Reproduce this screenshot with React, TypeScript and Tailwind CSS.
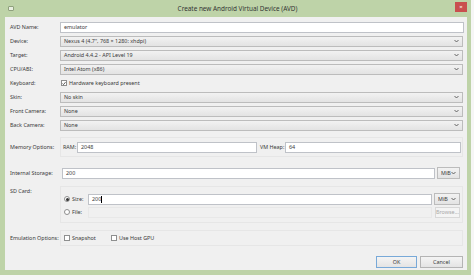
import React from 'react';

const Chevron: React.FC = () => (
  <svg width="5" height="4" viewBox="0 0 5 4" className="shrink-0">
    <path d="M0.5 1 L2.5 3 L4.5 1" fill="none" stroke="#555" strokeWidth="0.9" />
  </svg>
);

const Select: React.FC<{ value: string; className?: string }> = ({ value, className = '' }) => (
  <div
    className={`h-[11px] flex items-center justify-between pl-[3px] pr-[3px] border border-[#bcbcbc] bg-gradient-to-b from-[#f2f2f2] to-[#e3e3e3] ${className}`}
  >
    <span className="leading-[8px] whitespace-nowrap">{value}</span>
    <Chevron />
  </div>
);

const Input: React.FC<{ value?: string; className?: string; caret?: boolean }> = ({ value = '', className = '', caret }) => (
  <div className={`h-[11px] flex items-center pl-[3px] border border-[#bfc2c8] bg-white ${className}`}>
    <span className="leading-[8px]">{value}</span>
    {caret && <span className="w-[0.5px] h-[7px] bg-black" />}
  </div>
);

const Check: React.FC<{ checked?: boolean }> = ({ checked }) => (
  <div className="w-[6px] h-[6px] border border-[#8e8f8f] bg-white flex items-center justify-center shrink-0">
    {checked && (
      <svg width="5" height="5" viewBox="0 0 5 5">
        <path d="M0.6 2.6 L1.9 3.9 L4.4 0.8" fill="none" stroke="#222" strokeWidth="0.9" />
      </svg>
    )}
  </div>
);

const Radio: React.FC<{ checked?: boolean }> = ({ checked }) => (
  <div className="w-[6px] h-[6px] rounded-full border border-[#8e8f8f] bg-white flex items-center justify-center shrink-0">
    {checked && <div className="w-[3px] h-[3px] rounded-full bg-[#333]" />}
  </div>
);

const Row: React.FC<{ label: string; children: React.ReactNode }> = ({ label, children }) => (
  <div className="h-[14px] flex items-center">
    <div className="w-[50px] shrink-0">{label}</div>
    <div className="flex-1">{children}</div>
  </div>
);

const App: React.FC = () => {
  return (
    <div className="w-[474px] h-[280px] bg-[#f6f6f6] overflow-hidden font-['Noto_Sans',sans-serif]">
      <div className="w-[471px] h-[275px] bg-[#bed3a8] flex flex-col pl-[5px] pr-[4px] pb-[5px]">
        {/* Title bar */}
        <div className="h-[17px] flex items-center shrink-0">
          <div className="w-[6px] h-[5px] ml-[3px] bg-[#e8eee0] border border-[#8fa07d] rounded-[1px]" />
          <div className="flex-1 text-center text-[6.4px] text-[#333] pl-[6px]">Create new Android Virtual Device (AVD)</div>
          <div className="w-[12px] h-[10px] mb-[3px] bg-[#c94f4f] flex items-center justify-center text-white text-[6px] leading-none">
            ×
          </div>
        </div>

        {/* Client area */}
        <div className="flex-1 bg-[#f0f0f0] flex flex-col pl-[5px] pr-[4px] pt-[3px] text-[5.4px] text-[#3a3a3a] leading-[8px]">
          <Row label="AVD Name:">
            <Input value="emulator" className="mr-[-1px]" />
          </Row>
          <Row label="Device:">
            <Select value={'Nexus 4 (4.7", 768 × 1280: xhdpi)'} />
          </Row>
          <Row label="Target:">
            <Select value="Android 4.4.2 - API Level 19" />
          </Row>
          <Row label="CPU/ABI:">
            <Select value="Intel Atom (x86)" />
          </Row>
          <Row label="Keyboard:">
            <div className="flex items-center gap-[2px] pl-[1px]">
              <Check checked />
              <span>Hardware keyboard present</span>
            </div>
          </Row>
          <Row label="Skin:">
            <Select value="No skin" />
          </Row>
          <Row label="Front Camera:">
            <Select value="None" />
          </Row>
          <Row label="Back Camera:">
            <Select value="None" />
          </Row>

          {/* Memory */}
          <div className="mt-[5px] h-[20px] flex items-center">
            <div className="w-[50px] shrink-0">Memory Options:</div>
            <div className="flex-1 h-full border border-[#e6e6e6] flex items-center pl-[2px] pr-[1px]">
              <span className="w-[14px]">RAM:</span>
              <Input value="2048" className="w-[180px]" />
              <span className="ml-[3px] w-[25px]">VM Heap:</span>
              <Input value="64" className="flex-1" />
            </div>
          </div>

          {/* Internal storage */}
          <div className="mt-[9px] h-[14px] flex items-center">
            <div className="w-[50px] shrink-0">Internal Storage:</div>
            <div className="flex-1 flex items-center pl-[2px] pr-[3px] gap-[2px]">
              <Input value="200" className="flex-1" />
              <Select value="MiB" className="w-[23px] h-[12px]" />
            </div>
          </div>

          {/* SD card */}
          <div className="mt-[6px] flex">
            <div className="w-[50px] shrink-0 pt-[1px]">SD Card:</div>
            <div className="flex-1 h-[37px] border border-[#e6e6e6] pt-[6px] pl-[3px] pr-[2px] flex flex-col gap-[1px]">
              <div className="h-[12px] flex items-center">
                <Radio checked />
                <span className="ml-[2px] w-[16px]">Size:</span>
                <Input value="200" caret className="flex-1" />
                <Select value="MiB" className="ml-[2px] w-[26px] h-[12px]" />
              </div>
              <div className="h-[12px] flex items-center">
                <Radio />
                <span className="ml-[2px] w-[16px]">File:</span>
                <div className="flex-1 h-[11px] border border-[#e8e8e8] bg-[#f0f0f0]" />
                <div className="ml-[3px] w-[25px] h-[11px] border border-[#d8d8d8] bg-[#f4f4f4] text-[#a8a8a8] flex items-center justify-center">
                  Browse...
                </div>
              </div>
            </div>
          </div>

          {/* Emulation options */}
          <div className="mt-[7px] h-[16px] flex items-center">
            <div className="w-[50px] shrink-0">Emulation Options:</div>
            <div className="flex-1 h-full border border-[#e6e6e6] flex items-center pl-[3px]">
              <Check />
              <span className="ml-[2px] w-[39px]">Snapshot</span>
              <Check />
              <span className="ml-[2px]">Use Host GPU</span>
            </div>
          </div>

          {/* Buttons */}
          <div className="flex-1" />
          <div className="flex justify-end gap-[3px] mb-[2px]">
            <div className="w-[41px] h-[12px] border border-[#78a9d8] bg-gradient-to-b from-[#f4f4f4] to-[#e4e4e4] flex items-center justify-center">
              OK
            </div>
            <div className="w-[43px] h-[12px] border border-[#b4b4b4] bg-gradient-to-b from-[#f4f4f4] to-[#e4e4e4] flex items-center justify-center">
              Cancel
            </div>
          </div>
        </div>
      </div>
    </div>
  );
};

export default App;
